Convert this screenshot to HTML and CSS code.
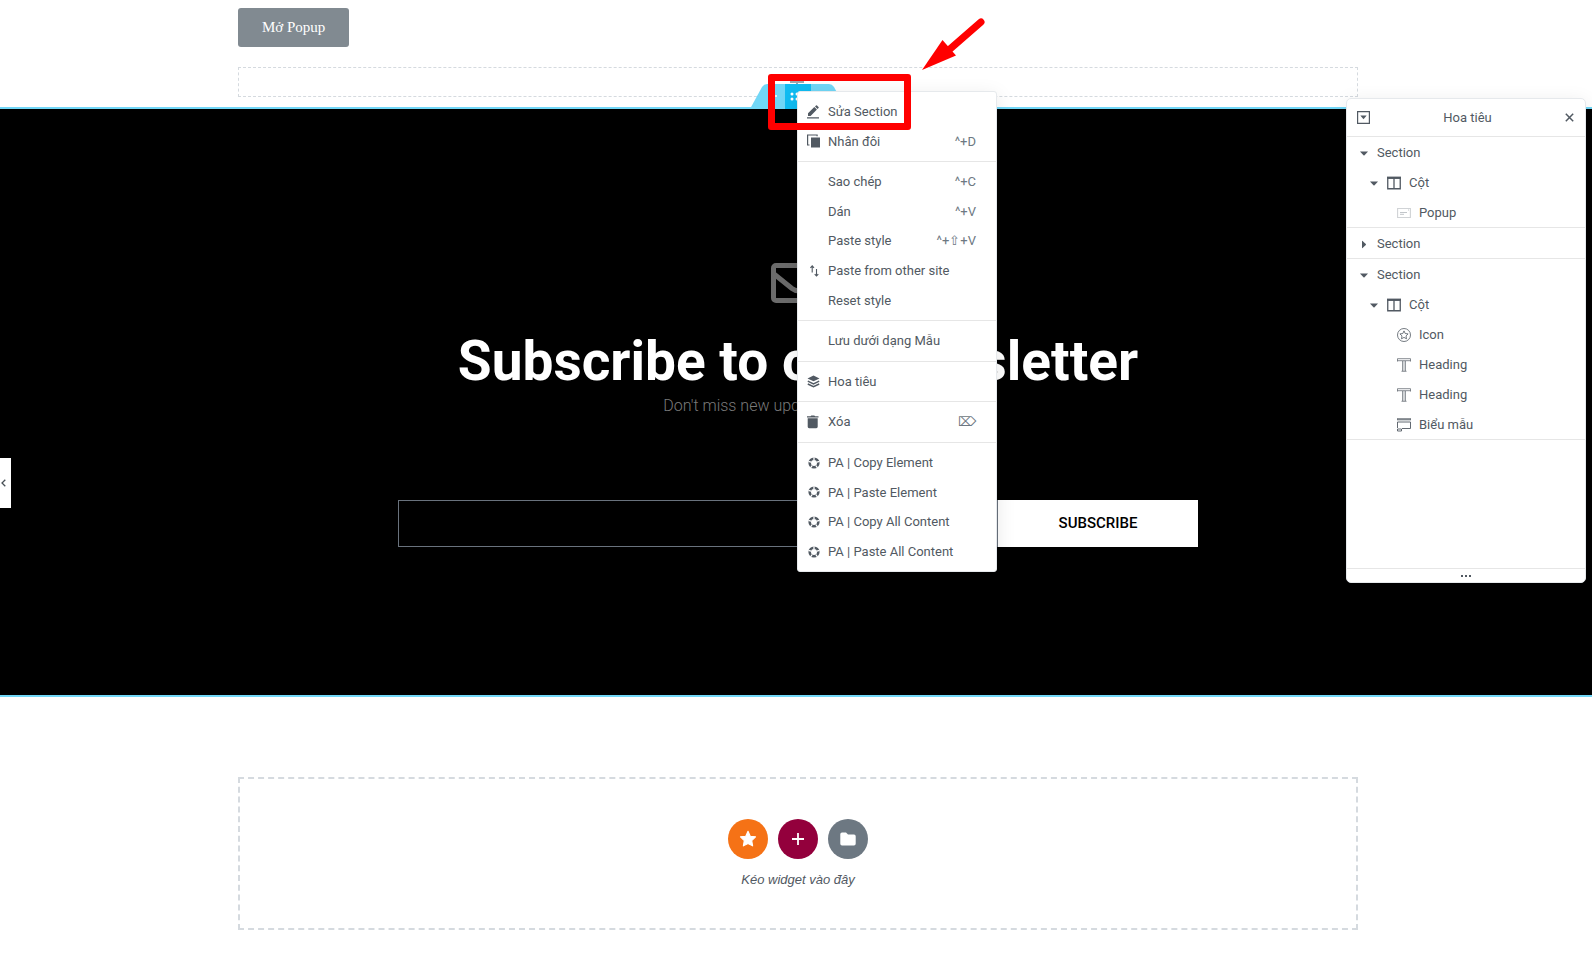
FILE: index.html
```html
<!DOCTYPE html>
<html lang="vi">
<head>
<meta charset="utf-8">
<title>Subscribe</title>
<link rel="stylesheet" href="styles.css">
</head>
<body>
<svg class="sprite" aria-hidden="true">
  <symbol id="pa" viewBox="0 0 12 12"><circle cx="6" cy="6" r="4.3" fill="none" stroke="currentColor" stroke-width="2.6"/><path d="M6 .2V3M.5 4.3l2.6.9M11.5 4.3l-2.6.9M2.5 10.9l1.6-2.3M9.5 10.9L7.900 8.600" stroke="#fff" stroke-width="1.300"/></symbol>
  <symbol id="down" viewBox="0 0 8 5"><path d="M0 .5h8L4.500 4.300q-.5.400-1 0z" fill="currentColor"/></symbol>
  <symbol id="column" viewBox="0 0 14 14"><path d="M.75 2h12.500v10.750H.75zM7 2v11" fill="none" stroke="currentColor" stroke-width="1.300"/><path d="M0 .6h14v2.200H0z" fill="currentColor"/></symbol>
  <symbol id="heading" viewBox="0 0 14 14"><path d="M.5 3.500v-2.800h13v2.800M.5 2.700h13M5.600 3v10M8.400 3v10M4.500 13.300h5" fill="none" stroke="currentColor" stroke-width=".7"/><path d="M6 3h2v10H6z" fill="currentColor" opacity=".2"/></symbol>
</svg>
<main class="page">
  <div class="container intro">
    <button class="popup-button" type="button">Mở Popup</button>
    <div class="empty-section"></div>
  </div>
  <section class="newsletter">
    <div class="section-tab" aria-hidden="true">
      <svg viewBox="0 0 96 29"><path d="M40 2h14M47 2v3" stroke="#9da5ae" stroke-width="2"/><path d="M0 29L12 7q2-3 5-3h62q3 0 5 3l12 22z" fill="#71d7f7"/><path d="M35 4h26v25H35z" fill="#10bcf2"/><path d="M18 16h9M22.500 12v8" stroke="#fff" stroke-width="1.500"/><g fill="#fff"><circle cx="42" cy="14" r="1.500"/><circle cx="42" cy="19" r="1.500"/><circle cx="47" cy="14" r="1.500"/><circle cx="47" cy="19" r="1.500"/></g></svg>
    </div>
    <svg class="envelope" viewBox="0 0 54 40" fill="none" stroke="#6b6b6b" stroke-width="5" aria-hidden="true"><rect x="2.500" y="2.500" width="49" height="35" rx="2.500"/><path d="M3 11l18 14.500q6 4.500 12 0L51 11"/></svg>
    <h1>Subscribe to our newsletter</h1>
    <p class="tagline">Don't miss new updates and discounts</p>
    <form class="subscribe">
      <input type="email" aria-label="Email">
      <button type="button">SUBSCRIBE</button>
    </form>
  </section>
  <div class="container drop-area">
    <div class="drop-actions">
      <button class="round star" type="button" aria-label="Star"><svg viewBox="0 0 16 16" width="18" height="18"><path d="M8 1.200l2 4.300 4.700.6-3.400 3.300.8 4.700L8 11.900l-4.100 2.200.8-4.700L1.300 6.100 6 5.500z" fill="#fff" stroke="#fff" stroke-linejoin="round"/></svg></button>
      <button class="round add" type="button" aria-label="Add"><svg viewBox="0 0 12 12" width="12" height="12"><path d="M6 0v12M0 6h12" stroke="#fff" stroke-width="1.800"/></svg></button>
      <button class="round folder" type="button" aria-label="Folder"><svg viewBox="0 0 16 14" width="16" height="14"><path d="M2 .5h4l2 2h6q1.700 0 1.700 1.700v7.600q0 1.700-1.700 1.700H2Q.3 13.500.3 11.800V2.200Q.3.500 2 .5z" fill="#fff"/></svg></button>
    </div>
    <p class="drop-label">Kéo widget vào đây</p>
  </div>
</main>

<button class="panel-toggle" type="button" aria-label="Panel"><svg viewBox="0 0 5 8" width="5" height="8"><path d="M4.300.7L1 4l3.300 3.300" fill="none" stroke="#495157" stroke-width="1.300"/></svg></button>

<div class="context-menu">
  <div class="group">
    <button type="button"><svg viewBox="0 0 14 14"><path d="M2 8.300L8.300 2l2.600 2.600-6.300 6.300H2zM9 1.400L10 .4q.5-.5 1 0l1.500 1.500q.5.500 0 1l-1 1zM1 12.200h12V13.400H1z" fill="currentColor"/></svg><span>Sửa Section</span></button>
    <button type="button"><svg viewBox="0 0 14 14"><path d="M5 3.500h9v10H5z" fill="currentColor"/><path d="M3.500 11H1.600V1h9.500v1.300" fill="none" stroke="currentColor" stroke-width="1.200"/></svg><span>Nhân đôi</span><kbd>^+D</kbd></button>
  </div>
  <div class="group">
    <button type="button"><i></i><span>Sao chép</span><kbd>^+C</kbd></button>
    <button type="button"><i></i><span>Dán</span><kbd>^+V</kbd></button>
    <button type="button"><i></i><span>Paste style</span><kbd>^+⇧+V</kbd></button>
    <button type="button"><svg viewBox="0 0 14 14"><path d="M6.200 8.500V2M4.400 3.800l1.800-1.900L8 3.800M10.500 5v7M8.700 10.200l1.800 1.800 1.800-1.800" fill="none" stroke="currentColor" stroke-width="1.100"/></svg><span>Paste from other site</span></button>
    <button type="button"><i></i><span>Reset style</span></button>
  </div>
  <div class="group"><button type="button"><i></i><span>Lưu dưới dạng Mẫu</span></button></div>
  <div class="group"><button type="button"><svg viewBox="0 0 14 14"><path d="M7.500.5l6 2.900-6 2.900-6-2.900z" fill="currentColor"/><path d="M1.800 6.200l5.700 2.700 5.700-2.700M1.800 9l5.700 2.700L13.200 9" fill="none" stroke="currentColor" stroke-width="1.400"/></svg><span>Hoa tiêu</span></button></div>
  <div class="group"><button type="button"><svg viewBox="0 0 14 14"><path d="M1 1.200h3.500L5.300.4h3l.8.8h3.400v1.200H1zM1.700 3.200h10v8.600q0 1.400-1.400 1.400H3.100q-1.400 0-1.400-1.400z" fill="currentColor"/></svg><span>Xóa</span><kbd>⌦</kbd></button></div>
  <div class="group">
    <button type="button"><svg class="pa"><use href="#pa"/></svg><span>PA | Copy Element</span></button>
    <button type="button"><svg class="pa"><use href="#pa"/></svg><span>PA | Paste Element</span></button>
    <button type="button"><svg class="pa"><use href="#pa"/></svg><span>PA | Copy All Content</span></button>
    <button type="button"><svg class="pa"><use href="#pa"/></svg><span>PA | Paste All Content</span></button>
  </div>
</div>

<aside class="navigator">
  <header>
    <button type="button" aria-label="Toggle all"><svg viewBox="0 0 13 13" width="13" height="13"><path d="M.6.600h11.800v11.800H.6z" fill="none" stroke="currentColor" stroke-width="1.200"/><path d="M3.300 4.500h6.400L6.500 8.200z" fill="currentColor"/></svg></button>
    <h2>Hoa tiêu</h2>
    <button type="button" aria-label="Close"><svg viewBox="0 0 9 9" width="9" height="9"><path d="M.8.8l7.400 7.400M8.200.8L.8 8.200" stroke="currentColor" stroke-width="1.500"/></svg></button>
  </header>
  <div class="tree">
    <div class="branch">
      <div class="row"><svg class="caret"><use href="#down"/></svg><span>Section</span></div>
      <div class="row level-2"><svg class="caret"><use href="#down"/></svg><svg class="icon"><use href="#column"/></svg><span>Cột</span></div>
      <div class="row level-3"><svg class="icon" viewBox="0 0 14 14"><path d="M.6 2.500h12.800v9H.6z" fill="none" stroke="#d0d3d6" stroke-width="1.100"/><path d="M3 6.500h7M3 8.300h4M11 4h1" stroke="#c2c6ca"/></svg><span>Popup</span></div>
    </div>
    <div class="branch">
      <div class="row"><svg class="caret closed"><use href="#down"/></svg><span>Section</span></div>
    </div>
    <div class="branch">
      <div class="row"><svg class="caret"><use href="#down"/></svg><span>Section</span></div>
      <div class="row level-2"><svg class="caret"><use href="#down"/></svg><svg class="icon"><use href="#column"/></svg><span>Cột</span></div>
      <div class="row level-3"><svg class="icon" viewBox="0 0 14 14" fill="none" stroke="currentColor" stroke-width=".8"><circle cx="7" cy="7" r="6.500"/><path d="M7 2.900l1.200 2.600 2.900.4L9 7.900l.5 2.900L7 9.400l-2.500 1.400L5 7.900l-2.100-2 2.900-.4z"/></svg><span>Icon</span></div>
      <div class="row level-3"><svg class="icon"><use href="#heading"/></svg><span>Heading</span></div>
      <div class="row level-3"><svg class="icon"><use href="#heading"/></svg><span>Heading</span></div>
      <div class="row level-3"><svg class="icon" viewBox="0 0 14 14" fill="none" stroke="currentColor" stroke-width=".9"><path d="M0 .8h14v1H0zM.5 10V4h13v6.500H5M.5 11h4v2h-4z"/></svg><span>Biểu mẫu</span></div>
    </div>
  </div>
  <footer><svg viewBox="0 0 10 2" width="10" height="2"><path d="M0 0h2v2H0zM4 0h2v2H4zM8 0h2v2H8z" fill="currentColor"/></svg></footer>
</aside>

<div class="highlight"></div>
<svg class="arrow" viewBox="0 0 64 54" aria-hidden="true"><path d="M59 5L28 32" stroke="#f00" stroke-width="7" stroke-linecap="round"/><path d="M0 53L20.500 23 34 38.500z" fill="#f00"/></svg>
</body>
</html>
```
FILE: styles.css
```css
* { box-sizing: border-box; }
body {
  margin: 0;
  background: #fff;
  color: #515962;
  font-family: Roboto, "Noto Sans", sans-serif;
  font-size: 13px;
}
button { border: 0; margin: 0; padding: 0; background: none; color: inherit; font: inherit; }
h1, h2, p { margin: 0; }
svg { display: block; flex: none; }
.sprite { position: absolute; width: 0; height: 0; }

.page { padding-bottom: 24px; }
.container { width: 1120px; max-width: 100%; margin: 0 auto; }
.intro, .drop-area { position: relative; left: 2px; }
.intro { padding: 8px 0 10px; }
.popup-button {
  display: block;
  padding: 12px 24px;
  border-radius: 3px;
  background: #818a91;
  color: #fff;
  font: 15px/15px "Liberation Serif", serif;
}
.empty-section { height: 30px; margin-top: 20px; border: 1px dashed #d5dadf; }

.newsletter {
  position: relative;
  display: flex;
  flex-direction: column;
  align-items: center;
  padding: 154px 0 148px 4px;
  border: solid #71d7f7;
  border-width: 2px 0;
  background: #000;
  color: #fff;
}
.section-tab { position: absolute; top: -29px; left: calc(50% - 46px); width: 96px; }
.envelope { width: 54px; height: 40px; }
.newsletter h1 { margin-top: 30px; font-size: 55px; line-height: 56px; font-weight: 700; text-align: center; }
.tagline { margin-top: 7px; color: #7a7a7a; font-size: 16px; line-height: 20px; font-weight: 300; }
.subscribe { display: flex; width: 800px; max-width: 100%; margin-top: 84px; }
.subscribe input {
  width: 75%;
  height: 47px;
  padding: 0 16px;
  border: 1px solid #69727d;
  border-radius: 0;
  background: transparent;
  color: #fff;
}
.subscribe button { width: 25%; padding-bottom: 2px; background: #fff; color: #000; font-size: 15px; font-weight: 500; }

.drop-area { margin-top: 80px; padding: 40px 0; border: 2px dashed #d5dadf; }
.drop-actions { display: flex; justify-content: center; gap: 10px; }
.round { display: grid; place-items: center; width: 40px; height: 40px; border-radius: 50%; }
.star { background: #f57216; }
.add { background: #93003c; }
.folder { background: #6d7882; }
.drop-label { margin-top: 13px; font: italic 13px/16px "Liberation Sans", sans-serif; text-align: center; }

.panel-toggle {
  position: absolute;
  top: 458px;
  left: 0;
  display: flex;
  align-items: center;
  width: 11px;
  height: 50px;
  padding-left: 1px;
  background: #fff;
}

.context-menu {
  position: absolute;
  top: 91px;
  left: calc(50% + 1px);
  width: 200px;
  border: 1px solid #e6e9ec;
  border-radius: 3px;
  background: #fff;
  box-shadow: 0 5px 20px rgba(0, 0, 0, .1);
}
.group { padding: 5px 0; }
.group + .group { border-top: 1px solid #e6e6e6; }
.group button {
  display: flex;
  align-items: center;
  width: 100%;
  padding: 7px 20px 7px 8px;
  line-height: 1.2;
  text-align: left;
}
.group svg, .group i { flex: none; width: 14px; height: 14px; margin: -1px 8px -1px 0; }
.group .pa { width: 12px; height: 12px; margin: 0 8px 0 2px; }
.group span { flex: 1; white-space: nowrap; }
kbd { color: #6d7882; font: inherit; }

.navigator {
  position: absolute;
  top: 98px;
  right: 6px;
  display: flex;
  flex-direction: column;
  width: 240px;
  height: 485px;
  border: 1px solid #e6e9ec;
  border-radius: 5px;
  background: #fff;
  box-shadow: 0 5px 20px rgba(0, 0, 0, .1);
}
.navigator header {
  display: flex;
  align-items: center;
  justify-content: space-between;
  height: 38px;
  padding: 0 11px 0 10px;
  border-bottom: 1px solid #e6e6e6;
}
.navigator h2 { font-size: 13px; line-height: 16px; font-weight: 400; }
.tree { flex: 1; }
.branch { border-bottom: 1px solid #e6e6e6; }
.row { display: flex; align-items: center; height: 30px; padding: 2px 0 0 13px; line-height: 16px; }
.level-2 { padding-left: 23px; }
.level-3 { padding-left: 50px; }
.caret { width: 8px; height: 5px; margin-right: 9px; }
.closed { transform: rotate(-90deg); }
.icon { width: 14px; height: 14px; margin-right: 8px; }
.navigator footer { display: grid; place-items: center; height: 14px; border-top: 1px solid #e6e6e6; }

.highlight {
  position: absolute;
  top: 74px;
  left: calc(50% - 28px);
  width: 143px;
  height: 56px;
  border: 7px solid #f00;
  border-radius: 3px;
}
.arrow { position: absolute; top: 17px; left: calc(50% + 126px); width: 64px; height: 54px; }
```
